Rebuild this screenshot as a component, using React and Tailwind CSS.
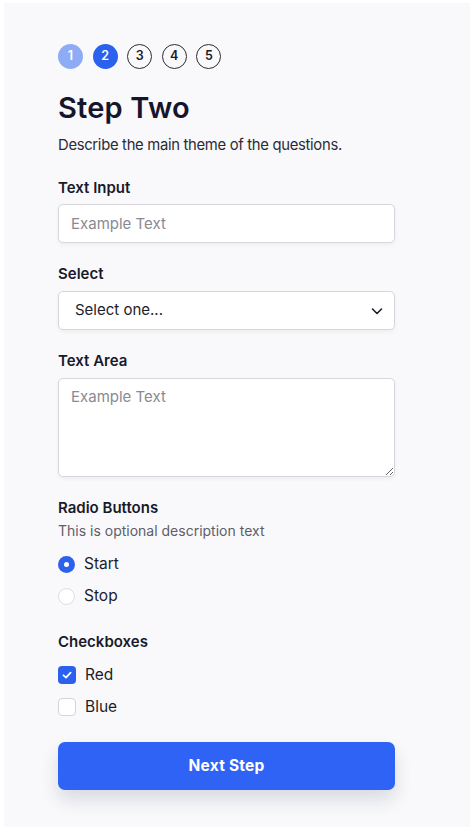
import React from "react";

function StepCircle({ n, state }) {
  if (state === "done")
    return (
      <div className="w-[25px] h-[25px] rounded-full bg-[#8eabf6] text-white flex items-center justify-center text-[12.5px] font-semibold">
        {n}
      </div>
    );
  if (state === "active")
    return (
      <div className="w-[25px] h-[25px] rounded-full bg-[#2c61ee] text-white flex items-center justify-center text-[12.5px] font-semibold">
        {n}
      </div>
    );
  return (
    <div className="w-[25px] h-[25px] rounded-full border border-[#2a2a33] text-[#1a1a24] flex items-center justify-center text-[12.5px] font-semibold">
      {n}
    </div>
  );
}

function Label({ children, className = "" }) {
  return (
    <div className={"text-[15px] leading-[20px] font-semibold text-[#181a2c] " + className}>
      {children}
    </div>
  );
}

export default function App() {
  return (
    <div
      className="bg-white pt-[3px] px-[4px] min-h-screen"
      style={{ fontFamily: "Inter, 'Noto Sans', sans-serif" }}
    >
      <div className="bg-[#f9f9fb] min-h-[824px] pl-[54px] pr-[75px] pt-[41px] pb-[30px]">
        <div className="flex gap-[9.6px]">
          <StepCircle n={1} state="done" />
          <StepCircle n={2} state="active" />
          <StepCircle n={3} />
          <StepCircle n={4} />
          <StepCircle n={5} />
        </div>

        <h1 className="mt-[21px] text-[29px] leading-[36px] font-semibold tracking-[0.2px] text-[#15162b]">
          Step Two
        </h1>
        <p className="mt-[7px] text-[14.8px] leading-[24px] tracking-[-0.3px] text-[#2a2b38]">
          Describe the main theme of the questions.
        </p>

        <Label className="mt-[21px]">Text Input</Label>
        <input
          className="mt-[6px] block w-full h-[39px] rounded-[5px] border border-[#d6d6dc] bg-white px-[12px] text-[15px] text-[#222] placeholder:text-[#8a8a92] shadow-[0_2px_4px_rgba(0,0,0,0.05)] outline-none"
          placeholder="Example Text"
        />

        <Label className="mt-[21px]">Select</Label>
        <div className="mt-[7px] flex items-center justify-between w-full h-[39px] rounded-[5px] border border-[#d6d6dc] bg-white pl-[16px] pr-[10px] shadow-[0_2px_4px_rgba(0,0,0,0.05)]">
          <span className="text-[15px] text-[#1c1d28]">Select one...</span>
          <svg width="14" height="14" viewBox="0 0 14 14" fill="none">
            <path d="M2.5 5 L7 9.5 L11.5 5" stroke="#1c1d28" strokeWidth="1.6" strokeLinecap="round" strokeLinejoin="round" />
          </svg>
        </div>

        <Label className="mt-[21px]">Text Area</Label>
        <textarea
          className="mt-[7px] block w-full h-[99px] rounded-[5px] border border-[#d6d6dc] bg-white px-[12px] pt-[7px] text-[15px] text-[#222] placeholder:text-[#8a8a92] shadow-[0_2px_4px_rgba(0,0,0,0.05)] outline-none"
          placeholder="Example Text"
        />

        <Label className="mt-[21px]">Radio Buttons</Label>
        <div className="mt-[3px] text-[14px] leading-[20px] text-[#5d5e68]">
          This is optional description text
        </div>
        <div className="mt-[11px] flex flex-col gap-[8px]">
          <div className="flex items-center h-[24px]">
            <div className="w-[17px] h-[17px] rounded-full bg-[#2c61ee] flex items-center justify-center">
              <div className="w-[5px] h-[5px] rounded-full bg-white" />
            </div>
            <span className="ml-[9px] text-[15.5px] text-[#1c1d28]">Start</span>
          </div>
          <div className="flex items-center h-[24px]">
            <div className="w-[17px] h-[17px] rounded-full bg-white border border-[#dcdce1]" />
            <span className="ml-[9px] text-[15.5px] text-[#1c1d28]">Stop</span>
          </div>
        </div>

        <Label className="mt-[24px]">Checkboxes</Label>
        <div className="mt-[11px] flex flex-col gap-[8px]">
          <div className="flex items-center h-[24px]">
            <div className="w-[18px] h-[18px] rounded-[4px] bg-[#2c61ee] flex items-center justify-center">
              <svg width="12" height="12" viewBox="0 0 12 12" fill="none">
                <path d="M2.5 6.3 L5 8.6 L9.6 3.6" stroke="white" strokeWidth="1.8" strokeLinecap="round" strokeLinejoin="round" />
              </svg>
            </div>
            <span className="ml-[9px] text-[15.5px] text-[#1c1d28]">Red</span>
          </div>
          <div className="flex items-center h-[24px]">
            <div className="w-[18px] h-[18px] rounded-[4px] bg-white border border-[#d4d4da]" />
            <span className="ml-[9px] text-[15.5px] text-[#1c1d28]">Blue</span>
          </div>
        </div>

        <button className="mt-[23px] w-full h-[48px] rounded-[7px] bg-[#2f63f6] text-white text-[15.5px] font-bold tracking-[0.2px] shadow-[0_10px_18px_rgba(30,40,80,0.14)]">
          Next Step
        </button>
      </div>
    </div>
  );
}
